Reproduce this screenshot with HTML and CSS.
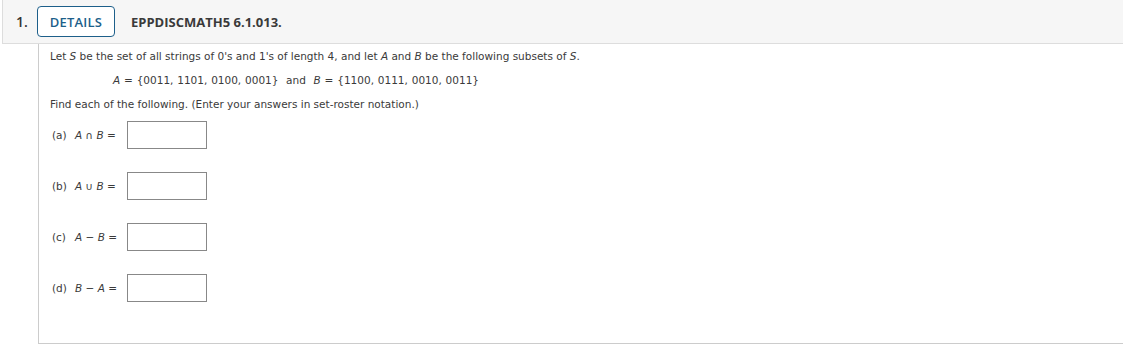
FILE: index.html
```html
<!DOCTYPE html>
<html lang="en">
<head>
  <meta charset="UTF-8" />
  <title>EPPDISCMATH5 6.1.013.</title>
  <link rel="stylesheet" href="styles.css">
</head>
<body>

<div class="q-head">
  <span class="q-num">1.</span>
  <span class="btn-details">DETAILS</span>
  <span class="q-ref">EPPDISCMATH5 6.1.013.</span>
</div>

<div class="q-body">
  <p>Let <i>S</i> be the set of all strings of 0's and 1's of length 4, and let <i>A</i> and <i>B</i> be the following subsets of <i>S</i>.</p>
  <p class="sets"><i>A</i> = {0011, 1101, 0100, 0001}&nbsp; and &nbsp;<i>B</i> = {1100, 0111, 0010, 0011}</p>
  <p class="instr">Find each of the following. (Enter your answers in set-roster notation.)</p>

  <div class="part">
    <span class="part-label">(a)</span>
    <span class="expr"><i>A</i> &cap; <i>B</i> =</span>
    <span class="answer"></span>
  </div>
  <div class="part">
    <span class="part-label">(b)</span>
    <span class="expr"><i>A</i> &cup; <i>B</i> =</span>
    <span class="answer"></span>
  </div>
  <div class="part">
    <span class="part-label">(c)</span>
    <span class="expr"><i>A</i> &minus; <i>B</i> =</span>
    <span class="answer"></span>
  </div>
  <div class="part">
    <span class="part-label">(d)</span>
    <span class="expr"><i>B</i> &minus; <i>A</i> =</span>
    <span class="answer"></span>
  </div>
</div>

</body>
</html>
```

FILE: styles.css
```css
body {
  margin: 0;
  padding: 0;
  background: #ffffff;
  color: #333;
  font-family: "DejaVu Sans", Verdana, sans-serif;
}

/* question header */
.q-head {
  margin-left: 2px;
  height: 43px;
  background: #f6f6f6;
  border-left: 1px solid #dddddd;
  border-bottom: 1px solid #dddddd;
  display: flex;
  align-items: center;
  font-family: "Open Sans", sans-serif;
  font-weight: 600;
  font-size: 13px;
}

.q-num {
  width: 34px;
  padding-left: 13px;
  box-sizing: border-box;
  color: #333;
  font-size: 14px;
}

.btn-details {
  width: 78px;
  height: 31px;
  box-sizing: border-box;
  border: 1px solid #1d5f8a;
  border-radius: 4px;
  background: #ffffff;
  color: #1d5f8a;
  display: flex;
  align-items: center;
  justify-content: center;
  letter-spacing: 0.2px;
}

.q-ref {
  margin-left: 16px;
  font-weight: 700;
  color: #3a3a3a;
}

/* question body */
.q-body {
  margin-left: 38px;
  height: 300px;
  box-sizing: border-box;
  border-left: 1px solid #cccccc;
  border-bottom: 1px solid #cccccc;
  padding: 7px 0 0 11px;
  font-size: 10.5px;
  color: #3a3a3a;
}

.q-body p {
  margin: 0 0 13px;
  line-height: 11px;
}

.q-body .instr {
  margin-bottom: 11px;
}

.sets {
  padding-left: 63px;
  word-spacing: 0.5px;
}

.part {
  display: flex;
  align-items: center;
  height: 28px;
  margin-bottom: 23px;
  padding-left: 2px;
}

.part-label {
  width: 23px;
}

.expr {
  width: 52px;
}

.answer {
  width: 80px;
  height: 28px;
  box-sizing: border-box;
  border: 1px solid #888888;
  background: #ffffff;
}
```
